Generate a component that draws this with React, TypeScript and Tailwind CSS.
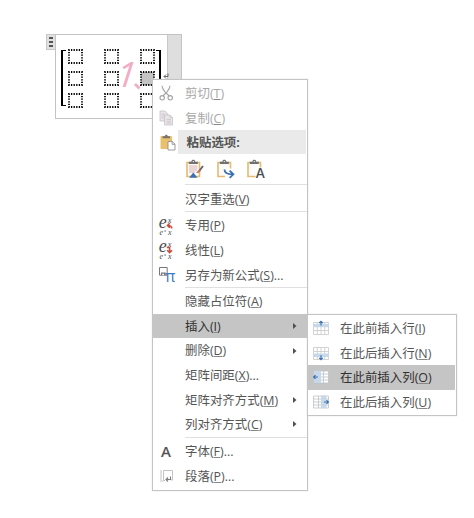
import type { ReactNode } from "react";

type Item = {
  label: string;
  hotkey: string;
  suffix?: string;
  icon?: ReactNode;
  disabled?: boolean;
  active?: boolean;
  submenu?: boolean;
};

const CutIcon = () => (
  <svg width="16" height="16" viewBox="0 0 16 16" fill="none" stroke="#a3a3a3" strokeWidth="1.1">
    <path d="M3 .8C3.2 3.4 4.4 4.8 6 6.8L10.2 11M11 .8C10.8 3.4 9.6 4.8 8 6.8L3.8 11" />
    <circle cx="3.2" cy="12.8" r="2.2" />
    <circle cx="11.2" cy="12.8" r="2.2" />
  </svg>
);

const CopyIcon = () => (
  <svg width="16" height="16" viewBox="0 0 16 16" fill="#e9e5e9" stroke="#c6c1c6" strokeWidth="0.8">
    <path d="M1 1h5l2.5 2.5V11H1z" />
    <path d="M2.5 4h4M2.5 6h4M2.5 8h4" />
    <path d="M5.5 5H11l2.5 2.5V15h-8z" />
    <path d="M11 5v2.5h2.5M7.5 9.5H12M7.5 11.3H12M7.5 13H12" />
  </svg>
);

const PasteIcon = () => (
  <svg width="17" height="17" viewBox="0 0 17 17">
    <rect x="0.5" y="2" width="11.5" height="13" rx="0.8" fill="#e9c16c" />
    <path d="M2.6 4.3V2.3h2.2c0-2.2 3-2.2 3 0H10v2z" fill="#77736e" />
    <path d="M8 7.5h4.3l2.7 2.6V16H8z" fill="#fff" stroke="#858585" strokeWidth="0.8" />
    <path d="M12.1 7.5v2.8H15" fill="none" stroke="#858585" strokeWidth="0.8" />
  </svg>
);

const Clipboard = ({ children }: { children: ReactNode }) => (
  <svg className="overflow-visible" width="20" height="20" viewBox="0 0 20 20">
    <path d="M2 3.5h12.5v14H2z" fill="#fcfbfa" stroke="#e5bb72" strokeWidth="1.6" />
    <path d="M3.8 5V2.8h2.6c0-2.6 3.8-2.6 3.8 0h2.6V5z" fill="#6e6e73" />
    <circle cx="8.3" cy="2.6" r="0.7" fill="#fff" />
    {children}
  </svg>
);

const KeepFormat = () => (
  <Clipboard>
    <path d="M4 7h8.5M4 9h8.5M4 11h8M4 13h6" stroke="#e3c9cb" strokeWidth="1.3" />
    <path d="m18 7-3.8 5" stroke="#65666b" strokeWidth="2" />
    <path d="M14.4 11.3c-2-.3-2.2 2-3.5 2.5 2 .7 4-.2 4.6-1.6z" fill="#c77c69" />
    <path d="m8.3 13.5-4.2 5.3h8.4z" fill="#3970b4" />
  </Clipboard>
);

const MergeFormat = () => (
  <Clipboard>
    <path d="M9 9.5h8v9.5H9z" fill="#fff" />
    <path d="M8.5 10.5c0 3.6 2.5 4.8 8 4.8M13.6 11.6l3.8 3.7-3.8 3.5" fill="none" stroke="#3970b4" strokeWidth="1.8" />
  </Clipboard>
);

const TextOnly = () => (
  <Clipboard>
    <path d="M9.5 8.5h9V19h-9z" fill="#fff" />
    <text x="9.6" y="19" fontSize="13.5" fontWeight="500" fill="#4b4c50" fontFamily="Inter, sans-serif">
      A
    </text>
  </Clipboard>
);

const EquationIcon = ({ linear }: { linear?: boolean }) => (
  <svg
    className="-ml-px overflow-visible"
    width="16"
    height="20"
    viewBox="0 0 16 20"
    fontFamily="Liberation Serif, serif"
    fontStyle="italic"
    fill="#4c4c50"
  >
    <text x="0.8" y="12.3" fontSize="18">e</text>
    <text x="9.8" y="6.5" fontSize="8.5">x</text>
    <text x="1.5" y="18.5" fontSize="8">e</text>
    <text x="6" y="16" fontSize="4.5">x</text>
    <text x="10" y="18.5" fontSize="8">x</text>
    {linear ? (
      <path d="M8.8 7.5h2.8v5M9.2 10.2l2.4 2.4 2.4-2.4" fill="none" stroke="#c94b38" strokeWidth="1.6" />
    ) : (
      <path d="M13.8 12.6c0-2.4-1.2-3.1-4.3-3.1M11.8 7.2 9.5 9.5l2.3 2.3" fill="none" stroke="#c94b38" strokeWidth="1.6" />
    )}
  </svg>
);

const SaveEquationIcon = () => (
  <svg className="-ml-px overflow-visible" width="17" height="18" viewBox="0 0 17 18">
    <path d="M1.5 1.5h7.7v7.7H1.5z" fill="#fff" stroke="#77777a" strokeWidth="1" />
    <path d="M3 6.5h4.7v2.7H3z" fill="#77777a" />
    <path d="M4.2 7.8h1.8v1.4H4.2z" fill="#fff" />
    <text x="7" y="16.3" fontSize="16" fontFamily="Open Sans, sans-serif" fill="#3f7bc0">
      π
    </text>
  </svg>
);

const ParagraphIcon = () => (
  <svg width="16" height="16" viewBox="0 0 16 16" fill="none" stroke="#bdbdbd" strokeWidth="0.9">
    <path d="M6 12.5H4.5v-10h9v9.5h-2" />
    <path d="M1 3h2M1 5h2M1 7h2M1 9h2M1 11h2M1 13h3.5" />
    <path d="M11.5 8.5v3H7M9 9.5l-2 2 2 2" stroke="#7c7c7c" strokeWidth="1.1" />
  </svg>
);

const InsertRow = ({ below }: { below?: boolean }) => (
  <svg className="-ml-px" width="16" height="16" viewBox="0 0 16 16">
    <path d="M.5 2.5h15v12H.5z" fill="#fff" />
    <path
      d="M.5 2.5h15v12H.5zM.5 6.5h15M.5 10.5h15M4.3 2.5v12M8 2.5v12M11.7 2.5v12"
      fill="none"
      stroke="#c9c9c9"
      strokeWidth="0.8"
    />
    {below ? (
      <>
        <path d="M0 8.5h16V12H0z" fill="#c6d8ea" />
        <path d="M8 10.3v4M6.2 12.8 8 14.6l1.8-1.8" fill="none" stroke="#3970b4" strokeWidth="1.2" />
      </>
    ) : (
      <>
        <path d="M0 4h16v3.2H0z" fill="#c6d8ea" />
        <path d="M8 5.5V1.5M6.2 3.2 8 1.4l1.8 1.8" fill="none" stroke="#3970b4" strokeWidth="1.2" />
      </>
    )}
  </svg>
);

const InsertColumn = ({ after }: { after?: boolean }) => (
  <svg className="-ml-px" width="16" height="16" viewBox="0 0 16 16">
    <path d="M.5 2h15v12H.5z" fill="#fff" />
    <path
      d="M.5 2h15v12H.5zM.5 5h15M.5 8h15M.5 11h15M5.5 2v12M10.5 2v12"
      fill="none"
      stroke="#bfc1c4"
      strokeWidth="0.8"
    />
    {after ? (
      <>
        <path d="M8 1.6h5.5V14H8z" fill="#c6d8ea" />
        <path d="M11 8h4M13.5 6.2 15.3 8l-1.8 1.8" fill="none" stroke="#3970b4" strokeWidth="1.2" />
      </>
    ) : (
      <>
        <path d="M1 1.6h7V14H1z" fill="#c6d8ea" />
        <path d="M5 8H1M2.5 6.2.7 8l1.8 1.8" fill="none" stroke="#3970b4" strokeWidth="1.2" />
      </>
    )}
  </svg>
);

const MenuItem = ({ label, hotkey, suffix, icon, disabled, active, submenu }: Item) => (
  <div
    className={`flex h-[24.6px] shrink-0 items-center ${active ? "bg-[#c5c5c5] text-[#303030]" : ""} ${
      disabled ? "text-[#a8a8a8]" : ""
    }`}
  >
    <span className="flex w-[32px] shrink-0 items-center pl-[6px]">{icon}</span>
    <span className="pt-[2px] whitespace-nowrap">
      {label}(<span className="underline decoration-[#888] decoration-1 underline-offset-1">{hotkey}</span>){suffix}
    </span>
    {submenu && (
      <svg className="mr-[10px] ml-auto" width="4" height="6" viewBox="0 0 4 6" fill="#505050">
        <path d="M0 0 3.5 3 0 6z" />
      </svg>
    )}
  </div>
);

const Separator = () => <div className="ml-[32px] h-px shrink-0 bg-[#e0e0e0]" />;

const MatrixEditor = () => (
  <div className="flex items-start pt-[34px] pl-[46px]">
    <div className="flex h-[16px] w-[9px] flex-col items-center justify-evenly border border-r-0 border-[#c8c8c8] bg-[#e1e1e1]">
      <i className="h-[2px] w-[4px] bg-[#555]" />
      <i className="h-[2px] w-[4px] bg-[#555]" />
      <i className="h-[2px] w-[4px] bg-[#555]" />
    </div>
    <div className="relative flex h-[85px] w-[127px] border border-[#c3c3c3] bg-white">
      <div className="mt-[15px] ml-[5px] h-[56px] w-[5px] shrink-0 border-2 border-r-0 border-black border-y-[1px]" />
      <div className="mt-[14px] ml-[2px] grid h-[59px] w-[87px] shrink-0 grid-cols-[15px_15px_15px] content-between justify-between">
        {[0, 1, 2, 3, 4, 5, 6, 7, 8].map((cell) => (
          <svg key={cell} width="15" height="15" viewBox="0 0 15 15">
            <path
              d="M1 1H14V14H1z"
              fill={cell === 5 ? "#c4c4c4" : "none"}
              stroke="#000"
              strokeWidth="1.8"
              strokeDasharray="1.3 1.3"
              strokeDashoffset="0.65"
            />
          </svg>
        ))}
      </div>
      <div className="mt-[15px] ml-[1px] h-[56px] w-[5px] shrink-0 border-2 border-l-0 border-black border-y-[1px]" />
      <div className="absolute top-0 right-0 h-full w-[14px] border-l border-[#c8c8c8] bg-[#dedede]" />
      <span className="absolute top-[21px] left-[61px] -skew-x-6 text-[35px] text-[#f2adc4] italic">1</span>
      <svg className="absolute top-[48px] left-[78px]" width="7" height="7" viewBox="0 0 7 7" fill="none" stroke="#f2adc4" strokeWidth="2.8">
        <path d="m1 1 4.5 4.5" />
      </svg>
      <svg className="absolute top-[38px] left-[107px]" width="7" height="7" viewBox="0 0 7 7" fill="none" stroke="#666">
        <path d="M5 .5v3H1M3 1.5 1 3.5l2 2" />
      </svg>
    </div>
  </div>
);

const ContextMenu = () => (
  <div className="absolute top-[79px] left-[152px] flex h-[412px] w-[156px] flex-col border border-[#c4c4c4] bg-white pt-[1px] shadow-[0_0_1px_#ccc]">
    <MenuItem label="剪切" hotkey="T" icon={<CutIcon />} disabled />
    <MenuItem label="复制" hotkey="C" icon={<CopyIcon />} disabled />
    <div className="flex h-[24px] shrink-0 items-center">
      <span className="flex w-[25px] shrink-0 pl-[7px]">
        <PasteIcon />
      </span>
      <span className="mr-px flex h-full flex-1 items-center bg-[#eaeaea] pt-[2px] pl-[8.5px] font-bold">粘贴选项:</span>
    </div>
    <div className="flex h-[30px] shrink-0 items-center gap-[10.5px] pl-[32px]">
      <KeepFormat />
      <MergeFormat />
      <TextOnly />
    </div>
    <Separator />
    <div className="h-[1.5px] shrink-0" />
    <MenuItem label="汉字重选" hotkey="V" />
    <Separator />
    <div className="h-[1px] shrink-0" />
    <MenuItem label="专用" hotkey="P" icon={<EquationIcon />} />
    <MenuItem label="线性" hotkey="L" icon={<EquationIcon linear />} />
    <MenuItem label="另存为新公式" hotkey="S" suffix="..." icon={<SaveEquationIcon />} />
    <Separator />
    <div className="h-[1px] shrink-0" />
    <MenuItem label="隐藏占位符" hotkey="A" />
    <MenuItem label="插入" hotkey="I" active submenu />
    <MenuItem label="删除" hotkey="D" submenu />
    <MenuItem label="矩阵间距" hotkey="X" suffix="..." />
    <MenuItem label="矩阵对齐方式" hotkey="M" submenu />
    <MenuItem label="列对齐方式" hotkey="C" submenu />
    <Separator />
    <div className="h-[1.5px] shrink-0" />
    <MenuItem
      label="字体"
      hotkey="F"
      suffix="..."
      icon={<span className="pt-px pl-[2px] text-[15px] font-semibold">A</span>}
    />
    <MenuItem label="段落" hotkey="P" suffix="..." icon={<ParagraphIcon />} />
  </div>
);

const InsertMenu = () => (
  <div className="absolute top-[314px] left-[307px] h-[102px] w-[150px] border border-[#c4c4c4] bg-white pt-[1px] pr-px shadow-[0_0_1px_#ccc]">
    <MenuItem label="在此前插入行" hotkey="I" icon={<InsertRow />} />
    <MenuItem label="在此后插入行" hotkey="N" icon={<InsertRow below />} />
    <MenuItem label="在此前插入列" hotkey="O" icon={<InsertColumn />} active />
    <MenuItem label="在此后插入列" hotkey="U" icon={<InsertColumn after />} />
  </div>
);

export default function App() {
  return (
    <main className="relative h-[518px] w-[474px] overflow-hidden bg-white font-['Open_Sans','Noto_Sans_CJK_SC',sans-serif] text-[12.45px] leading-none text-[#555]">
      <MatrixEditor />
      <ContextMenu />
      <InsertMenu />
    </main>
  );
}
